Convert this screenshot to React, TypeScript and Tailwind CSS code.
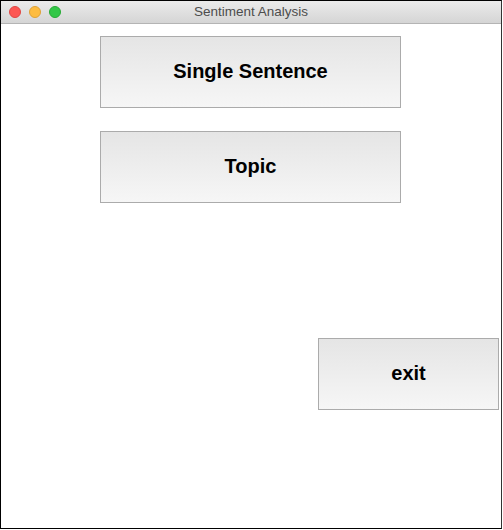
import React from "react";

const btn =
  "flex items-center justify-center pb-[3px] border border-[#ababab] bg-gradient-to-b from-[#e5e5e5] to-[#f6f6f6] text-[20px] font-bold text-black";

export default function App() {
  return (
    <div className="w-[503px] h-[530px] bg-white" style={{ fontFamily: '"Liberation Sans", Arial, sans-serif' }}>
      <div className="flex flex-col w-[502px] h-[529px] border border-black border-r-[#333]">
        <div className="relative flex h-[23px] shrink-0 items-center justify-center border-b border-[#b4b4b4] bg-gradient-to-b from-[#ebebeb] to-[#d5d5d5]">
          <div className="absolute left-[8px] top-[5px] flex gap-[8px]">
            <span className="block h-[12px] w-[12px] rounded-full bg-[#fc5753] border border-[#df4744]" />
            <span className="block h-[12px] w-[12px] rounded-full bg-[#fdbc40] border border-[#dea236]" />
            <span className="block h-[12px] w-[12px] rounded-full bg-[#33c748] border border-[#27aa35]" />
          </div>
          <span className="text-[13.5px] text-[#4d4d4d]">Sentiment Analysis</span>
        </div>
        <div className="flex flex-1 flex-col">
          <div className={`${btn} ml-[99px] mt-[12px] h-[72px] w-[301px]`}>Single Sentence</div>
          <div className={`${btn} ml-[99px] mt-[23px] h-[72px] w-[301px]`}>Topic</div>
          <div className={`${btn} ml-[317px] mt-[135px] h-[72px] w-[181px]`}>exit</div>
        </div>
      </div>
    </div>
  );
}
